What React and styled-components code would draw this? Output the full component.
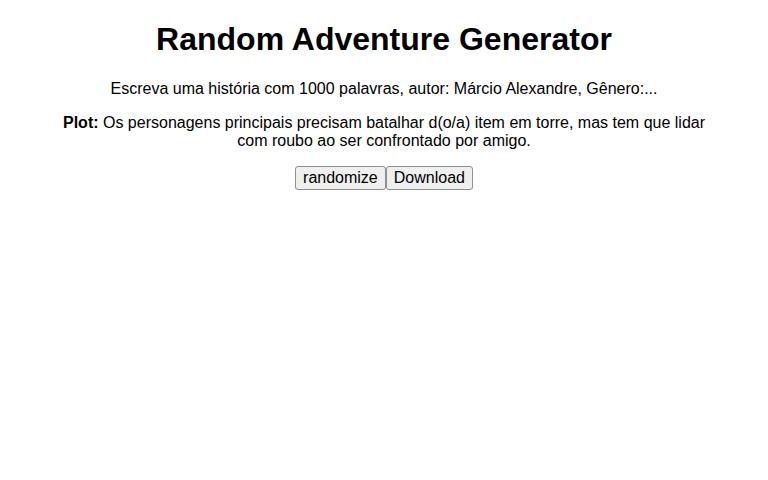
import styled, { createGlobalStyle } from "styled-components"

const Global = createGlobalStyle`
    body {
        margin: 0;
        font-family: "Liberation Sans", Arial, sans-serif;
        color: #000;
        background: #fff;
    }
`

const Page = styled.div`
    display: flex;
    flex-direction: column;
    align-items: center;
    text-align: center;
`

const Title = styled.h1`
    font-size: 32px;
    font-weight: bold;
    margin: 21.44px 0;
`

const Text = styled.p`
    max-width: 660px;
    font-size: 16px;
    margin: 0 0 16px;
`

const Buttons = styled.div`
    display: flex;
`

const Button = styled.button`
    font-family: "Liberation Sans", Arial, sans-serif;
    font-size: 16px;
    line-height: normal;
    color: #000;
    background: #efefef;
    border: 1px solid #8f8f8f;
    border-radius: 3px;
    padding: 2px 7px;
`

const App = () => {
    return (
        <Page>
            <Global />
            <Title>Random Adventure Generator</Title>
            <Text>Escreva uma história com 1000 palavras, autor: Márcio Alexandre, Gênero:...</Text>
            <Text>
                <b>Plot:</b> Os personagens principais precisam batalhar d(o/a) item em torre, mas tem que lidar com roubo ao ser confrontado por amigo.
            </Text>
            <Buttons>
                <Button>randomize</Button>
                <Button>Download</Button>
            </Buttons>
        </Page>
    )
}

export default App
